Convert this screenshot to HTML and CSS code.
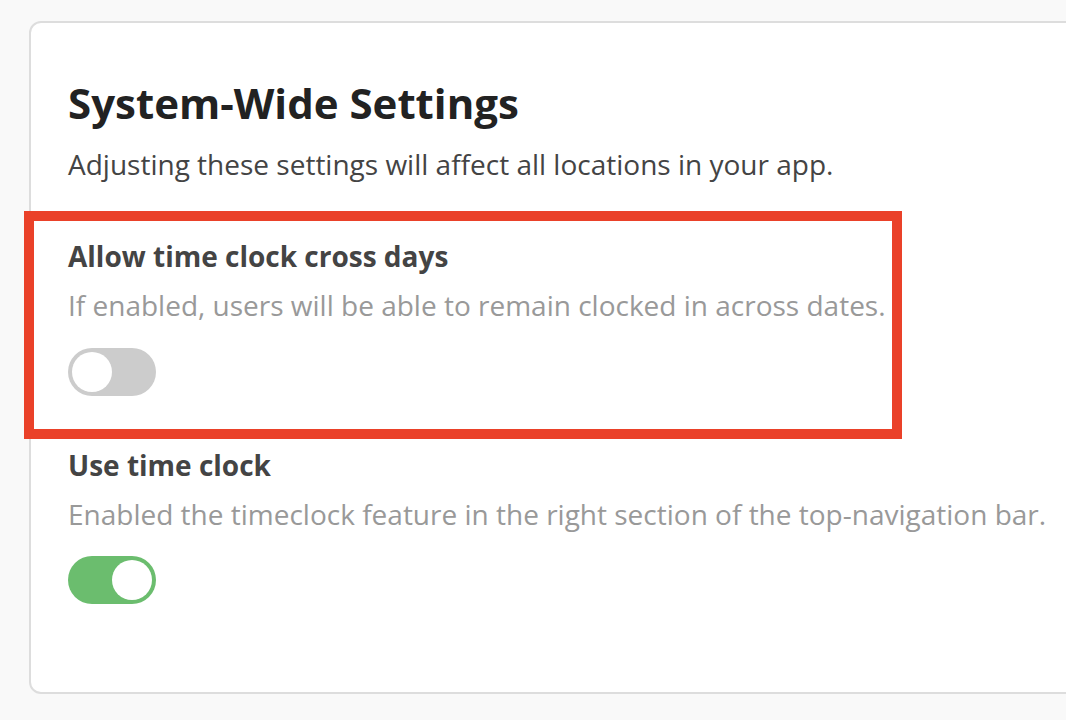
FILE: index.html
```html
<!DOCTYPE html>
<html lang="en">
<head>
    <meta charset="UTF-8">
    <meta name="viewport" content="width=device-width, initial-scale=1.0">
    <title>System-Wide Settings</title>
    <link rel="stylesheet" href="styles.css">
</head>
<body>
    <div class="card">
        <h1>System-Wide Settings</h1>
        <p class="subtitle">Adjusting these settings will affect all locations in your app.</p>

        <div class="setting highlighted">
            <div class="setting-label">Allow time clock cross days</div>
            <div class="setting-desc">If enabled, users will be able to remain clocked in across dates.</div>
            <label class="toggle">
                <input type="checkbox">
                <span class="slider"></span>
            </label>
        </div>

        <div class="setting">
            <div class="setting-label">Use time clock</div>
            <div class="setting-desc">Enabled the timeclock feature in the right section of the top-navigation bar.</div>
            <label class="toggle">
                <input type="checkbox" checked>
                <span class="slider"></span>
            </label>
        </div>
    </div>
</body>
</html>
```

FILE: styles.css
```css
body {
    margin: 0;
    background: #f9f9f9;
    font-family: "Open Sans", Arial, sans-serif;
    overflow: hidden;
}

.card {
    margin: 21px -40px 0 29px;
    height: 673px;
    box-sizing: border-box;
    background: #fff;
    border: 2px solid #dddddd;
    border-radius: 12px;
    padding: 52px 37px 0;
}

h1 {
    margin: 0;
    font-size: 42px;
    line-height: 56px;
    font-weight: 700;
    color: #222;
}

.subtitle {
    margin: 14px 0 0;
    font-size: 28px;
    line-height: 38px;
    color: #444;
}

.setting {
    margin-top: 7px;
}

.setting-label {
    font-size: 28px;
    line-height: 38px;
    font-weight: 700;
    color: #444;
}

.setting-desc {
    margin-top: 11px;
    font-size: 28px;
    line-height: 38px;
    color: #999;
    white-space: nowrap;
}

.highlighted {
    width: 824px;
    margin: 28px 0 0 -44px;
    padding: 16px 0 33px 34px;
    border: 10px solid #ea4129;
}

.toggle {
    display: block;
    position: relative;
    width: 88px;
    height: 48px;
    margin-top: 23px;
}

.highlighted .toggle {
    margin-top: 24px;
}

.toggle input {
    display: none;
}

.slider {
    position: absolute;
    inset: 0;
    background: #cccccc;
    border-radius: 24px;
}

.slider::before {
    content: "";
    position: absolute;
    left: 4px;
    top: 4px;
    width: 40px;
    height: 40px;
    border-radius: 50%;
    background: #fff;
}

.toggle input:checked + .slider {
    background: #6bbd6e;
}

.toggle input:checked + .slider::before {
    left: 44px;
}
```
